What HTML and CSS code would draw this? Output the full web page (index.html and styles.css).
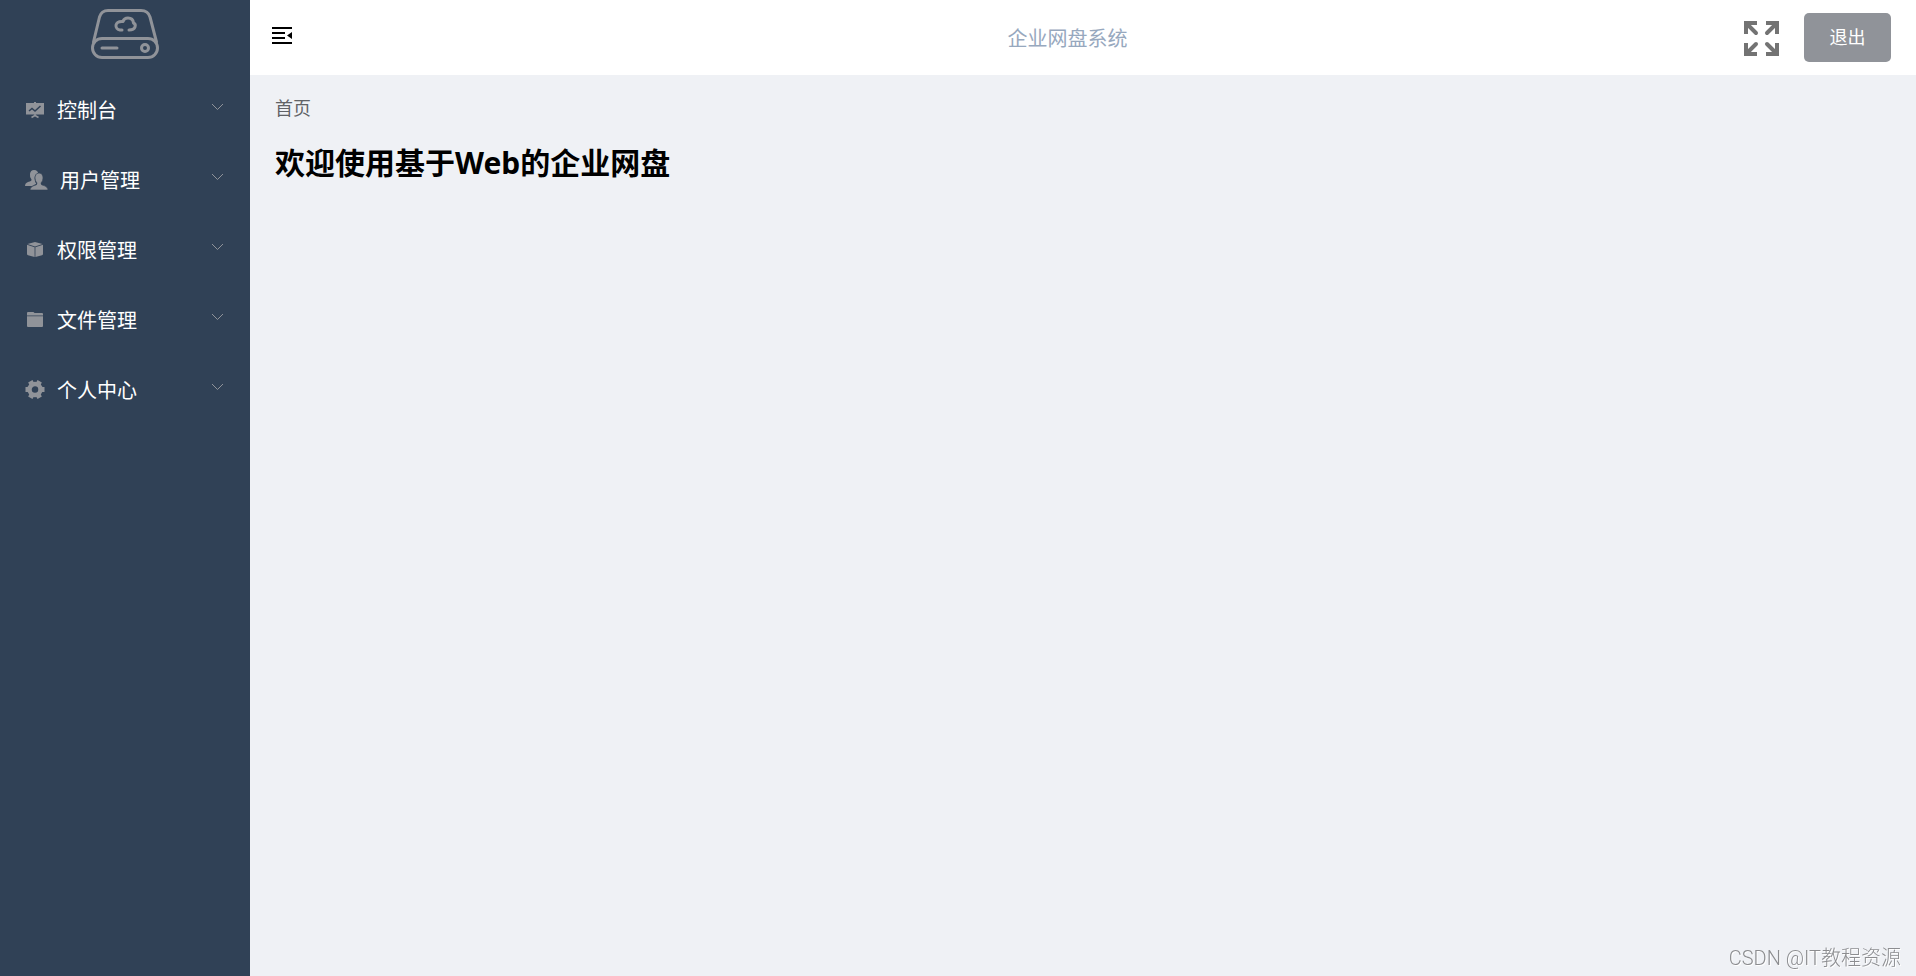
FILE: index.html
```html
<!DOCTYPE html>
<html lang="zh-CN">
<head>
    <meta charset="UTF-8">
    <meta name="viewport" content="width=device-width, initial-scale=1.0">
    <title>企业网盘系统</title>
    <link rel="stylesheet" href="styles.css">
</head>
<body>
    <div class="layout">
        <aside class="sidebar">
            <div class="logo">
                <svg width="68" height="50" viewBox="0 0 68 50" fill="none" stroke="#909399" stroke-width="3" stroke-linecap="round" stroke-linejoin="round">
                    <path d="M2.500 33L8.500 8Q10.500 1.500 17 1.500H50Q57 1.500 59 8L65.500 33"/>
                    <rect x="1.500" y="29.500" width="65" height="19" rx="9.500"/>
                    <path d="M11 39H26"/>
                    <circle cx="54" cy="39" r="3.500"/>
                    <path d="M31 21H29A5 4.500 0 0 1 25 16Q26 12 32 12.500Q33 9 37 9Q42 9 42.500 14Q45 15 44 18Q43 21 38 21"/>
                </svg>
            </div>
            <nav class="menu">
                <button type="button" class="menu-item">
                    <svg class="menu-icon" width="20" height="20" viewBox="0 0 20 20" fill="#909399">
                        <path d="M1 3H9V2H11V3H19V14.500H1Z"/>
                        <path d="M4 11L7 8.500L10 11L15.500 6" fill="none" stroke="#304156" stroke-width="1.500"/>
                        <path d="M10 14V15.500L6.500 17.500M10 15.500L13.500 17.500" fill="none" stroke="#909399" stroke-width="1.600"/>
                    </svg>
                    <span class="menu-title">控制台</span>
                    <svg class="menu-arrow" width="13" height="8" viewBox="0 0 13 8"><path d="M1 1L6.500 6.500L12 1"/></svg>
                </button>
                <button type="button" class="menu-item">
                    <svg class="menu-icon" width="23" height="22" viewBox="0 0 23 22" fill="#909399">
                        <path d="M9 1C12 1 13 3 13 4C10 5 9 8 10 12C10 14 12 14 11 15L7 17H0Q0 14 3 13Q7 12 6.500 10.500Q4.500 8 5 5Q5.500 1 9 1Z"/>
                        <path d="M14 4C17 4 18 7 18 9Q18 12 16 14Q15.500 16 19 16.500Q23 18 23 21H5Q5 18 9 16.500Q12.500 16 12 14Q10 12 10 9C10 7 11 4 14 4Z" stroke="#304156" stroke-width="0.600"/>
                    </svg>
                    <span class="menu-title">用户管理</span>
                    <svg class="menu-arrow" width="13" height="8" viewBox="0 0 13 8"><path d="M1 1L6.500 6.500L12 1"/></svg>
                </button>
                <button type="button" class="menu-item">
                    <svg class="menu-icon" width="20" height="20" viewBox="0 0 20 20" fill="#909399">
                        <path d="M10 2L17.500 4L10 6.500L2.500 4Z"/>
                        <path d="M2 4.800L9.600 7.200V17L3 15.200Q2 14.800 2 14Z"/>
                        <path d="M18 4.800L10.400 7.200V17L17 15.200Q18 14.800 18 14Z"/>
                    </svg>
                    <span class="menu-title">权限管理</span>
                    <svg class="menu-arrow" width="13" height="8" viewBox="0 0 13 8"><path d="M1 1L6.500 6.500L12 1"/></svg>
                </button>
                <button type="button" class="menu-item">
                    <svg class="menu-icon" width="20" height="20" viewBox="0 0 20 20" fill="#909399">
                        <path d="M2 5.500V3Q2 2 3 2H8Q9 2 9.500 3H17Q18 3 18 4V5.500Z"/>
                        <path d="M2 6.300H18V16Q18 17 17 17H3Q2 17 2 16Z"/>
                    </svg>
                    <span class="menu-title">文件管理</span>
                    <svg class="menu-arrow" width="13" height="8" viewBox="0 0 13 8"><path d="M1 1L6.500 6.500L12 1"/></svg>
                </button>
                <button type="button" class="menu-item">
                    <svg class="menu-icon" width="20" height="20" viewBox="0 0 20 20">
                        <g fill="none" stroke="#909399">
                            <circle cx="10" cy="9.500" r="5.500" stroke-width="4.500"/>
                            <path d="M.5 9.500H4M16 9.500H19.500M5.300 1.300L7 4.300M14.700 1.300L13 4.300M5.300 17.700L7 14.700M14.700 17.700L13 14.700" stroke-width="5"/>
                        </g>
                    </svg>
                    <span class="menu-title">个人中心</span>
                    <svg class="menu-arrow" width="13" height="8" viewBox="0 0 13 8"><path d="M1 1L6.500 6.500L12 1"/></svg>
                </button>
            </nav>
        </aside>

        <div class="container">
            <header class="header">
                <button type="button" class="icon-btn toggle" aria-label="收起菜单">
                    <svg width="20" height="18" viewBox="0 0 20 18">
                        <path d="M0 0H20V2H0ZM0 5H13V7H0ZM0 10H13V12H0ZM0 15H20V17H0ZM20 5V12L15 8.500Z"/>
                    </svg>
                </button>
                <div class="system-name">企业网盘系统</div>
                <div class="actions">
                    <button type="button" class="icon-btn" aria-label="全屏">
                        <svg width="36" height="36" viewBox="0 0 36 36" fill="none" stroke="#737373" stroke-width="4">
                            <path d="M3 14V3H14M23 3H34V14M34 23V34H23M14 34H3V23"/>
                            <path d="M4 4L13 13M33 4L24 13M33 33L24 24M4 33L13 24" stroke-linecap="round"/>
                        </svg>
                    </button>
                    <button type="button" class="logout">退出</button>
                </div>
            </header>

            <main class="main">
                <div class="breadcrumb">首页</div>
                <h1>欢迎使用基于Web的企业网盘</h1>
            </main>
        </div>
    </div>
    <div class="watermark">CSDN @IT教程资源</div>
</body>
</html>
```
FILE: styles.css
```css
* {
    box-sizing: border-box;
}

body {
    margin: 0;
    background-color: #eff1f5;
    color: #000;
    font-family: "Noto Sans", "Noto Sans CJK SC", sans-serif;
}

button {
    padding: 0;
    border: none;
    background: none;
    font-family: inherit;
    cursor: pointer;
}

svg {
    display: block;
}

.layout {
    display: flex;
    min-height: 100vh;
}

.sidebar {
    flex: 0 0 250px;
    background-color: #304156;
}

.logo {
    display: flex;
    justify-content: center;
    height: 75px;
    padding-top: 9px;
}

.menu-item {
    display: flex;
    align-items: center;
    width: 100%;
    height: 70px;
    padding: 0 26px 0 25px;
    color: #fff;
    font-size: 20px;
    line-height: 28px;
    text-align: left;
}

.menu-icon {
    flex: none;
    margin-right: 12px;
}

.menu-title {
    flex: 1;
    padding-top: 2px;
}

.menu-arrow {
    margin-bottom: 6px;
    fill: none;
    stroke: #909399;
    stroke-width: 1;
}

.container {
    flex: 1;
    min-width: 0;
}

.header {
    display: grid;
    grid-template-columns: 120px 1fr 148px;
    align-items: center;
    height: 75px;
    padding: 0 25px 0 22px;
    background-color: #fff;
}

.toggle {
    justify-self: start;
    margin-bottom: 4px;
}

.system-name {
    padding-top: 2px;
    color: #97a8be;
    font-size: 20px;
    line-height: 28px;
    text-align: center;
}

.actions {
    display: flex;
    align-items: center;
    justify-content: space-between;
}

.logout {
    width: 87px;
    height: 49px;
    padding-bottom: 4px;
    border-radius: 5px;
    background-color: #909399;
    color: #fff;
    font-size: 18px;
}

.main {
    padding: 20px 25px;
}

.breadcrumb {
    color: #606266;
    font-size: 18px;
    line-height: 26px;
}

h1 {
    margin: 20px 0;
    font-size: 30px;
    line-height: 44px;
}

.watermark {
    position: fixed;
    right: 15px;
    bottom: 4px;
    color: #8c8d90;
    font-family: Roboto, "Noto Sans CJK SC", sans-serif;
    font-size: 20px;
    font-weight: 300;
    line-height: 28px;
    text-shadow: 1px 1px 0 #fff;
}
```
